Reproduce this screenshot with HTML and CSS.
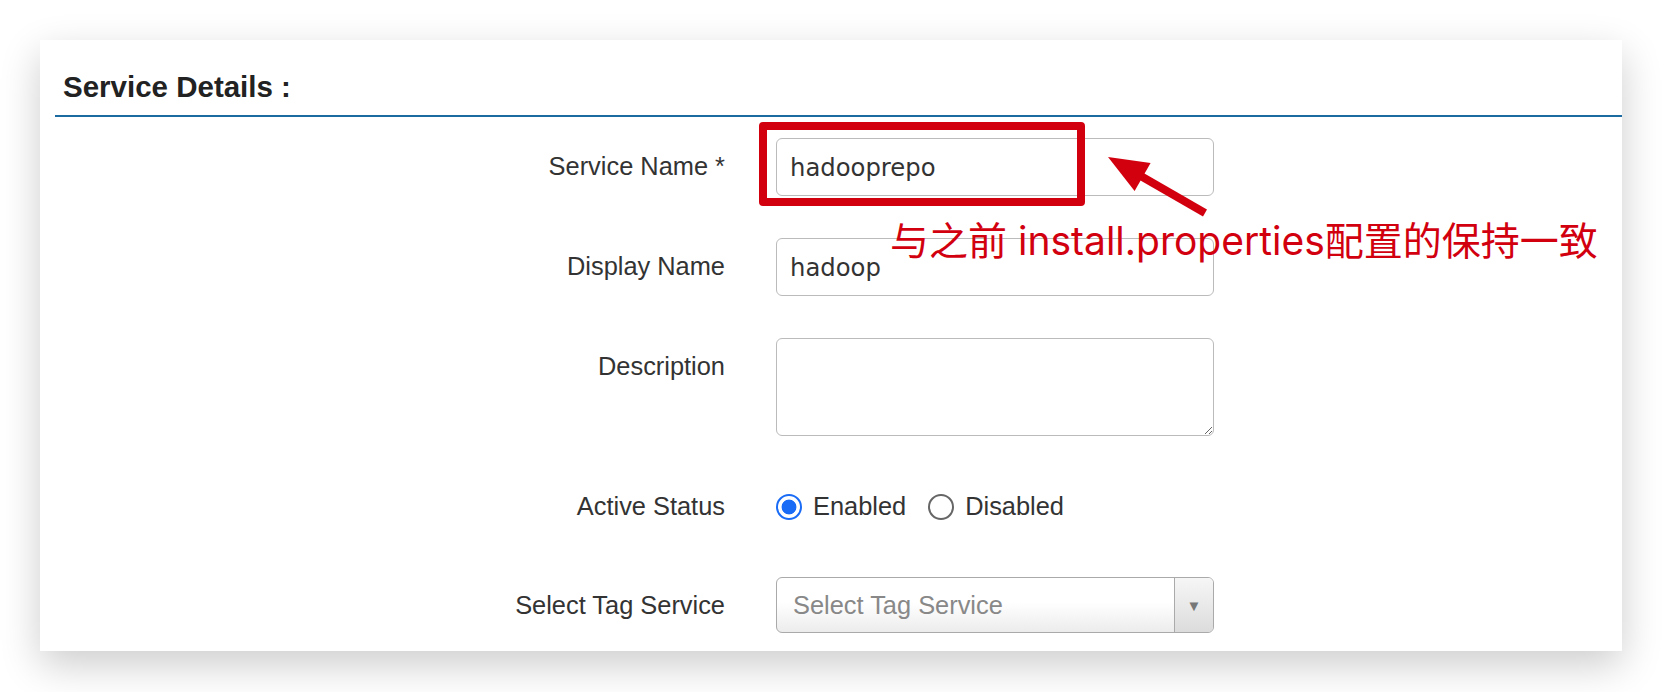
FILE: index.html
```html
<!DOCTYPE html>
<html lang="en">
<head>
  <meta charset="UTF-8" />
  <meta name="viewport" content="width=device-width, initial-scale=1.0">
  <title>Service Details</title>
  <link rel="stylesheet" href="styles.css">
</head>
<body>
  <!-- Service form card -->
  <section class="card">
    <div class="card-header">
      <h2 class="card-title">Service Details :</h2>
    </div>

    <form class="service-form">
      <label class="form-label" for="serviceName">Service Name *</label>
      <div class="form-field">
        <input class="text-input" id="serviceName" type="text" value="hadooprepo">
      </div>

      <label class="form-label" for="displayName">Display Name</label>
      <div class="form-field">
        <input class="text-input" id="displayName" type="text" value="hadoop">
      </div>

      <label class="form-label" for="description">Description</label>
      <div class="form-field">
        <textarea class="text-area" id="description"></textarea>
      </div>

      <span class="form-label">Active Status</span>
      <div class="form-field radio-group">
        <label class="radio-option">
          <input class="radio" type="radio" name="status" checked> Enabled
        </label>
        <label class="radio-option">
          <input class="radio" type="radio" name="status"> Disabled
        </label>
      </div>

      <span class="form-label">Select Tag Service</span>
      <div class="form-field">
        <div class="select-box">
          <span class="select-placeholder">Select Tag Service</span>
          <span class="select-arrow">&#9660;</span>
        </div>
      </div>
    </form>
  </section>

  <!-- Annotation overlay -->
  <div class="note-box"></div>
  <svg class="note-arrow" width="125" height="80" viewBox="0 0 125 80">
    <line x1="44" y1="30" x2="110" y2="68" stroke="#d2000f" stroke-width="8" />
    <polygon points="13,12 55.6,18 39.6,45.9" fill="#d2000f" />
  </svg>
  <div class="note-text">与之前 install.properties配置的保持一致</div>
</body>
</html>
```

FILE: styles.css
```css
/* GLOBAL */
:root {
  --label-color: #333;
  --border: #bbb;
  --accent: #1a6cf6;
  --note-red: #d2000f;
  --font-family: 'Liberation Sans', Arial, sans-serif;
}

html, body {
  margin: 0;
  padding: 0;
  background: #fff;
  font-family: var(--font-family);
  color: var(--label-color);
}

body {
  padding: 40px 0 0 40px;
  min-height: 692px;
  box-sizing: border-box;
}

/* CARD */
.card {
  width: 1582px;
  box-sizing: border-box;
  background: #fff;
  padding: 0 0 18px 15px;
  box-shadow: 0 14px 38px rgba(0, 0, 0, 0.2);
}

.card-header {
  padding: 29px 0 10px 8px;
  border-bottom: 2px solid #1b6aa0;
}

.card-title {
  margin: 0;
  font-size: 29.5px;
  line-height: 36px;
  font-weight: bold;
  color: #222;
}

/* FORM GRID */
.service-form {
  display: grid;
  grid-template-columns: 670px 438px;
  grid-template-rows: 58px 58px 98px 57px 56px;
  column-gap: 51px;
  row-gap: 42px;
  margin-top: 21px;
}

.form-label {
  text-align: right;
  font-size: 25.4px;
  line-height: 30px;
  padding-top: 13px;
}

.form-field {
  display: flex;
}

.text-input,
.text-area {
  width: 100%;
  height: 100%;
  box-sizing: border-box;
  border: 1px solid var(--border);
  border-radius: 6px;
  padding: 0 13px;
  font-family: 'DejaVu Sans', sans-serif;
  font-size: 24.3px;
  color: #333;
  background: #fff;
  outline: none;
}

.text-area {
  padding: 10px 13px;
}

/* RADIOS */
.radio-group {
  align-items: center;
  gap: 22px;
}

.radio-option {
  display: flex;
  align-items: center;
  gap: 11px;
  font-size: 25.4px;
  color: #333;
}

.radio {
  appearance: none;
  -webkit-appearance: none;
  margin: 0;
  width: 26px;
  height: 26px;
  border: 2px solid #666;
  border-radius: 50%;
  background: #fff;
  box-sizing: border-box;
}

.radio:checked {
  border-color: var(--accent);
  background: radial-gradient(circle, var(--accent) 0 7px, #fff 7.8px);
}

/* SELECT */
.select-box {
  width: 100%;
  height: 100%;
  box-sizing: border-box;
  display: flex;
  align-items: center;
  border: 1px solid #aaa;
  border-radius: 6px;
  background: linear-gradient(#fff 45%, #ececec);
  overflow: hidden;
}

.select-placeholder {
  flex: 1;
  padding-left: 16px;
  font-size: 25.4px;
  color: #888;
}

.select-arrow {
  width: 38px;
  height: 100%;
  display: flex;
  align-items: center;
  justify-content: center;
  border-left: 1px solid #aaa;
  background: linear-gradient(#f6f6f6, #dcdcdc);
  color: #777;
  font-size: 15px;
}

/* ANNOTATION OVERLAY */
.note-box {
  position: absolute;
  left: 759px;
  top: 122px;
  width: 326px;
  height: 84px;
  box-sizing: border-box;
  border: 8px solid var(--note-red);
  border-radius: 4px;
}

.note-arrow {
  position: absolute;
  left: 1095px;
  top: 145px;
}

.note-text {
  position: absolute;
  left: 890px;
  top: 221px;
  font-family: Inter, 'Noto Sans CJK SC', sans-serif;
  font-size: 39px;
  line-height: 39px;
  color: var(--note-red);
  white-space: nowrap;
}
```
